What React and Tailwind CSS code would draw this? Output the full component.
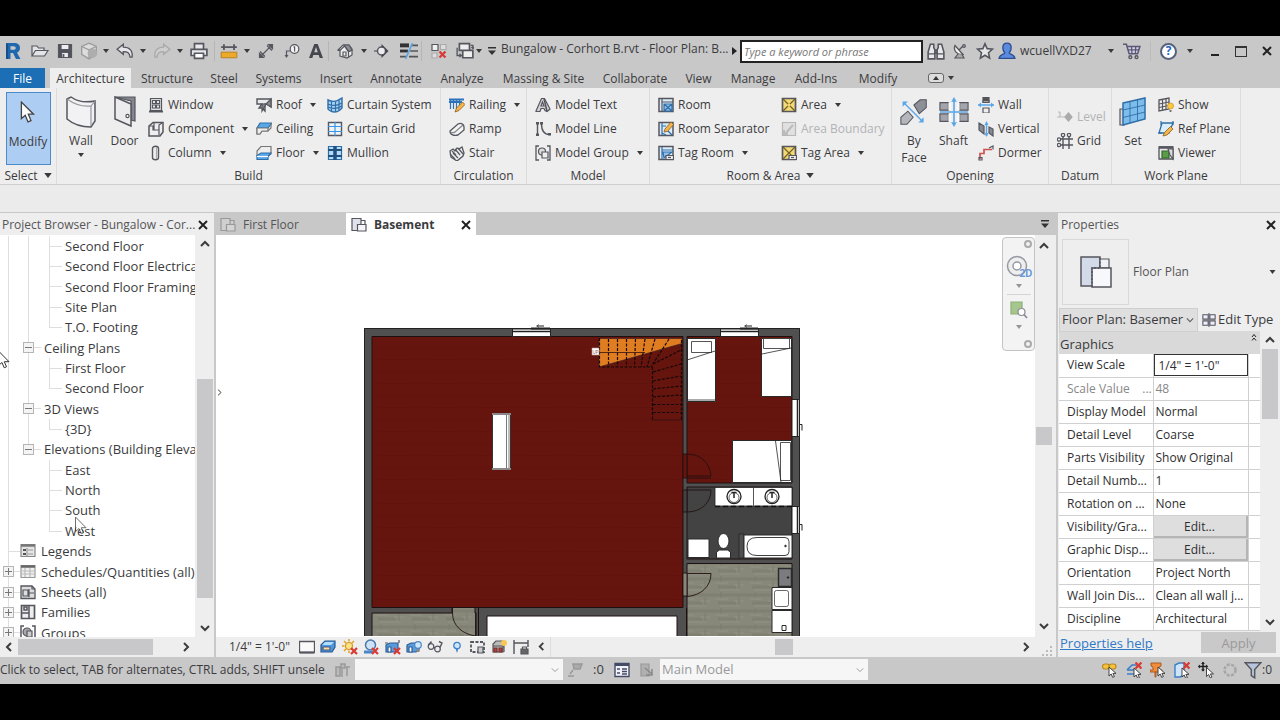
import React from "react";

/* ---------- small drawing helpers ---------- */

const D = "#55565e";

function Ic({ s = "size-4", vb = "0 0 16 16", children }) {
  return (
    <svg className={`${s} shrink-0`} viewBox={vb} fill="none" stroke={D} strokeWidth="1.2" aria-hidden="true">
      {children}
    </svg>
  );
}

function Caret({ s = "h-1 w-1.5" }) {
  return (
    <svg className={`${s} shrink-0`} viewBox="0 0 6 4" aria-hidden="true">
      <path d="M0 0h6L3 4z" fill="#3a3a3a" />
    </svg>
  );
}

function Chevron({ dir = "down", s = "size-2.5", color = "#3c3c3c", w = 2 }) {
  const paths = { down: "M1 3l4 4 4-4", up: "M1 7l4-4 4 4", left: "M7 1L3 5l4 4", right: "M3 1l4 4-4 4" };
  return (
    <svg className={`${s} shrink-0`} viewBox="0 0 10 10" fill="none" stroke={color} strokeWidth={w} aria-hidden="true">
      <path d={paths[dir]} />
    </svg>
  );
}

const RedX = ({ x = 9, y = 9 }) => (
  <path d={`M${x} ${y}l6 6M${x + 6} ${y}l-6 6`} stroke="#d83a34" strokeWidth="2.2" />
);

const Arrow = ({ x = 6, y = 5 }) => (
  <path transform={`translate(${x} ${y})`} d="M0 0v9l2.2-2 1.5 3.4 1.7-.8-1.5-3.2H7z" fill="#fff" stroke="#333" strokeWidth=".9" />
);

const CloseX = () => (
  <svg className="size-2.5" viewBox="0 0 10 10" stroke="#222" strokeWidth="2" aria-hidden="true">
    <path d="M1 1l8 8M9 1L1 9" />
  </svg>
);

/* ---------- title bar icons ---------- */

const icons = {
  logo: (
    <svg className="h-[18px] w-4" viewBox="0 0 16 18" aria-hidden="true">
      <path d="M1 1h8c4 0 6 2 6 5 0 2-1 4-3 4.700l3.500 6.300h-4.500l-3-6H5.500V17H1z" fill="#1f68ae" />
      <path d="M5.500 4.200h3c1.500 0 2.200.7 2.200 1.800S10 7.800 8.500 7.800h-3z" fill="#c8c8c9" />
      <path d="M1 1l2 1.500V17H1z" fill="#174f8a" />
    </svg>
  ),
  open: <Ic s="h-4 w-[18px]" vb="0 0 18 16"><path d="M1 13V3h5l1.500 2H13v2.500M1 13l3.500-5.500H17L13.500 13z" fill="#e4e4e6" /></Ic>,
  save: <Ic><path d="M1.500 1.500h13v13h-13z" fill="#51525d" /><path d="M4 1.500h8v5H4z" fill="#ededf0" /><path d="M4.500 9.500h7v5h-7z" fill="#ededf0" /><path d="M6.500 11v3" strokeWidth="1.800" /></Ic>,
  cube: <Ic s="size-[18px]"><path d="M8 1l6.500 3v7L8 15l-6.500-4V4z" fill="#dcdcdc" stroke="#9c9c9c" /><path d="M1.500 4L8 7v8M8 7l6.500-3" stroke="#9c9c9c" /><circle cx="11" cy="10" r="4.200" fill="#adadad" stroke="none" /></Ic>,
  undo: <Ic s="size-[18px]"><path d="M6.500 2L1 6.500 6.500 11V8.500c4 0 5.500 1 6 5h1.800c.7-6-2.300-9-7.800-9z" fill="#e6e6e8" /></Ic>,
  redo: <Ic s="size-[18px]"><path d="M9.500 2L15 6.500 9.500 11V8.500c-4 0-5.500 1-6 5H1.700c-.7-6 2.300-9 7.800-9z" fill="#cecece" stroke="#a9a9a9" /></Ic>,
  print: <Ic s="size-[18px]"><path d="M4 6V1.500h8V6M1 6.500h14V12H1z" fill="#e9e9eb" strokeWidth="1.500" /><path d="M4 10h8v4.500H4z" fill="#fff" strokeWidth="1.500" /></Ic>,
  measure: <Ic s="size-[18px]"><path d="M1 4.500h14M3.500 2v5M12.500 2v5" strokeWidth="1.600" /><path d="M1 9h14v5H1z" fill="#eda928" stroke="#b67d1d" strokeWidth=".8" /></Ic>,
  dim: <Ic><path d="M3 13L13 3M2 8.500l5 5M9 2.500l5 5" /><path d="M1.500 14.500v-4l4 4zM14.500 1.500v4l-4-4z" fill={D} /></Ic>,
  tag: <Ic><circle cx="10.500" cy="6" r="4.300" fill="#f3f3f3" /><path d="M10.600 3.500v5M9.600 4.400l1-.9M6 8H2.500v5" /><path d="M.5 12h4l-2 3z" fill={D} stroke="none" /></Ic>,
  letter: <Ic><path d="M1 15L6.300 1h3.400L15 15h-3.300l-1-3H5.300l-1 3zM6.200 9.300h3.600L8 4z" fill="#45464e" stroke="none" fillRule="evenodd" /></Ic>,
  house: <Ic><path d="M1 7l5-5h6l3 4v6l-5 3-7-2V7z" fill="#eee" /><path d="M1 7.500h2L7.500 3l4 6v5.500M11.500 8.500L15 7M6 9h3v4H6z" /><path d="M7 2h5l3 5-3 1.500z" fill="#8d8f98" /></Ic>,
  section: <Ic><circle cx="7.500" cy="8" r="4" fill="#ececee" strokeWidth="1.500" /><path d="M7.500 1l7 7-7 7v-3a4 4 0 000-8z" fill="#45464e" stroke="none" /><path d="M0 8h3.500" /></Ic>,
  thin: <Ic s="size-[18px]"><path d="M0 3h8" strokeWidth="3.500" stroke="#333" /><path d="M0 8h7" strokeWidth="2.500" stroke="#333" /><path d="M0 13h6M10 3h6M9 8h7M8 13h8" strokeWidth="1.500" stroke="#555" /><path d="M11 1L5 15" stroke="#5ea6e6" strokeWidth="1.500" /></Ic>,
  hid: <Ic><path d="M1 1.500h6v6H1z" fill="#eee" /><path d="M9.500 1.500H15v5H9.500zM1 10h5v5H1z" stroke="#aaa" fill="#ddd" /><RedX x={8.500} y={8.500} /></Ic>,
  sw: <Ic s="size-[18px]"><path d="M3 1.500h9v6H3zM6 7.500h9V14H6z" fill="#eee" strokeWidth="1.500" /><path d="M1 5v7h3M13 3h2v3" /><path d="M3 10l3 2-3 2zM13 4.500h4l-2 2z" fill={D} stroke="none" /></Ic>,
  cust: <svg className="h-2 w-2" viewBox="0 0 8 8" aria-hidden="true"><path d="M0 0h8v1.500H0zM0 3.500h8L4 8z" fill="#333" /></svg>,
  bino: <Ic s="size-[18px]"><path d="M3 2h3v3l1 2v8H1V9zM13 2h-3v3L9 7v8h6V9z" fill="#e8e8ea" strokeWidth="1.400" /><path d="M7 7h2v3H7zM1 10.500h6M9 10.500h6" /></Ic>,
  sat: <Ic><path d="M3 2.500c-2 5 2 9.500 8 9zM7 7l4-4" fill="#f3f3f3" strokeWidth="1.300" /><circle cx="12" cy="3" r="1.300" /><path d="M6 11l-3 4h9l-2-3.500" fill="#aaa" /></Ic>,
  star: <Ic s="size-[18px]"><path d="M8 1.500l1.900 4.400 4.800.4-3.600 3.200 1 4.800L8 11.800l-4.100 2.500 1-4.800L1.300 6.300l4.800-.4z" fill="#e6e6e8" strokeWidth="1.400" /></Ic>,
  user: <Ic s="size-[18px]"><path d="M8 1c2.500 0 3.700 1.700 3.700 4S10.500 9 10 9.700c0 1.300 4.500 1 5 4.800H1c.5-3.800 5-3.500 5-4.800C5.500 9 4.300 7.300 4.300 5S5.500 1 8 1z" fill="#5b8bdf" stroke="#2c4e8e" /></Ic>,
  cart: <Ic s="size-[18px]"><path d="M0 2h3l2.500 8.500H13L15 4H4" fill="#d6d6e2" stroke="#5b5878" strokeWidth="1.400" /><path d="M4.500 7h9.700M7.500 4l.5 6.500M11.300 4l-.3 6.500" stroke="#5b5878" /><circle cx="6.500" cy="13.500" r="1.300" /><circle cx="12" cy="13.500" r="1.300" /></Ic>,
};

const qat = [
  ["w-[26px]", "Application menu", icons.logo],
  ["w-7", "Open", icons.open],
  ["w-[22px]", "Save", icons.save],
  ["w-[26px]", "Synchronize", icons.cube],
  ["w-2", "Synchronize options", <Caret key="c" />],
  ["w-[29px]", "Undo", icons.undo],
  ["w-2", "Undo list", <Caret key="c" />],
  ["w-[29px]", "Redo", icons.redo],
  ["w-2", "Redo list", <Caret key="c" />],
  ["w-[30px]", "Print", icons.print],
  ["w-[29px] border-l border-[#b5b5b5]", "Measure", icons.measure],
  ["w-2", "Measure options", <Caret key="c" />],
  ["w-[30px]", "Aligned dimension", icons.dim],
  ["w-[22px]", "Tag by category", icons.tag],
  ["w-[25px]", "Text", icons.letter],
  ["w-8 border-l border-[#b5b5b5]", "Default 3D view", icons.house],
  ["w-2", "3D view options", <Caret key="c" />],
  ["w-7", "Section", icons.section],
  ["w-[25px]", "Thin lines", icons.thin],
  ["w-[34px] border-l border-[#b5b5b5]", "Close inactive views", icons.hid],
  ["w-5", "Switch windows", icons.sw],
  ["w-2", "Switch windows list", <Caret key="c" />],
  ["w-[18px]", "Customize toolbar", icons.cust],
];

const BarButton = ({ w, label, children }) => (
  <button aria-label={label} className={`flex h-5 shrink-0 items-center justify-center ${w}`}>{children}</button>
);

function TitleBar() {
  return (
    <header className="flex h-[30px] shrink-0 items-center overflow-hidden bg-[#c8c8c9]">
      {qat.map(([w, label, icon]) => <BarButton key={label} w={w} label={label}>{icon}</BarButton>)}
      <div className="min-w-[230px] flex-1 pb-1 text-[12px] whitespace-nowrap">Bungalow - Corhort B.rvt - Floor Plan: B...</div>
      <BarButton w="w-2" label="Expand search">
        <svg className="h-2 w-1.5" viewBox="0 0 6 8" aria-hidden="true"><path d="M0 0l5 4-5 4z" fill="#222" /></svg>
      </BarButton>
      <input aria-label="Search" placeholder="Type a keyword or phrase" className="ml-px h-[23px] w-[183px] shrink-0 border-2 border-[#222] bg-white px-0.5 text-[11px] italic placeholder:text-[#777]" />
      <BarButton w="w-[25px]" label="Search">{icons.bino}</BarButton>
      <BarButton w="w-6" label="Communication center">{icons.sat}</BarButton>
      <BarButton w="w-[26px]" label="Favorites">{icons.star}</BarButton>
      <button className="flex shrink-0 items-center gap-1 text-[12px]">{icons.user}<span className="w-[84px] text-left">wcuellVXD27</span><Caret /></button>
      <BarButton w="w-9" label="App store">{icons.cart}</BarButton>
      <BarButton w="w-9 border-l border-[#bbb]" label="Help">
        <span className="flex size-[17px] items-center justify-center rounded-full border-2 border-[#55617c] bg-white text-[12px] leading-none font-bold text-[#2a62c4]">?</span>
      </BarButton>
      <BarButton w="w-2" label="Help options"><Caret /></BarButton>
      <div className="flex w-[86px] shrink-0 justify-end">
        <BarButton w="w-[26px]" label="Minimize"><span className="mt-2 h-0.5 w-2 bg-[#222]" /></BarButton>
        <BarButton w="w-[26px]" label="Maximize"><span className="h-[11px] w-3 border border-t-2 border-[#333]" /></BarButton>
        <BarButton w="w-[26px]" label="Close"><CloseX /></BarButton>
      </div>
    </header>
  );
}

/* ---------- ribbon ---------- */

const tabs = [
  ["Structure", "w-[72px]"], ["Steel", "w-[42px]"], ["Systems", "w-[67px]"], ["Insert", "w-12"], ["Annotate", "w-[72px]"],
  ["Analyze", "w-[60px]"], ["Massing & Site", "w-[103px]"], ["Collaborate", "w-20"], ["View", "w-[47px]"],
  ["Manage", "w-[62px]"], ["Add-Ins", "w-16"], ["Modify", "w-[60px]"],
];

function Tabs() {
  return (
    <nav className="flex h-[22px] shrink-0 items-end overflow-hidden bg-[#c8c8c9] text-[12px]">
      <button className="h-5 w-[45px] shrink-0 bg-[#1c6fb5] pt-0.5 text-white">File</button>
      <button className="ml-[5px] h-5 w-[81px] shrink-0 bg-[#eeeeef] pt-0.5">Architecture</button>
      {tabs.map(([t, w]) => <button key={t} className={`h-5 shrink-0 pt-0.5 whitespace-nowrap ${w}`}>{t}</button>)}
      <button aria-label="Minimize ribbon" className="ml-5 flex h-5 items-center gap-1">
        <span className="flex h-2.5 w-4 items-center justify-center rounded-[3px] border border-[#666] bg-[#ddd]">
          <svg className="h-1 w-1.5" viewBox="0 0 6 4" aria-hidden="true"><path d="M0 4h6L3 0z" fill="#333" /></svg>
        </span>
        <Caret />
      </button>
    </nav>
  );
}

const blue = "#5aa7e8";
const paleBlue = "#a9d3f5";
const navy = "#2f6ea8";

const rib = {
  window: <Ic><path d="M2.500 1.500h11v12h-11z" fill="#ddd" /><path d="M4.500 3.500h3v3h-3zM8.500 3.500h3v3h-3zM4.500 8h3v3h-3zM8.500 8h3v3h-3z" fill="#f4f4f4" /><path d="M1 14.500h14" strokeWidth="2" /></Ic>,
  component: <Ic><path d="M1 5l4-3.500h10V11l-3 4H1z" fill="#eee" strokeWidth="1.500" /><path d="M1 5h4v4h6V4l3-2M11 9v5M6 9V2" /></Ic>,
  column: <Ic><path d="M4.500 3.500c0-3 6-3 6 0v9c0 3-6 3-6 0z" fill="#eee" strokeWidth="1.400" /><path d="M8.500 2v12" stroke="#aaa" /></Ic>,
  roof: <Ic><path d="M1 2h14v8l-3-2v-1H9v7l-3-3H3l3-4H1z" fill="#eaeaec" strokeWidth="1.400" /><path d="M6 7h4l-4 7zM10 7l5-5v8z" fill="#888a92" /></Ic>,
  ceiling: <Ic><path d="M4 2h12l-4 5H1z" fill={blue} stroke={navy} /><path d="M1 7v6h3l2-3h6l3-3V2" stroke="#777" /><path d="M1 13V7h11v3H6l-2 3z" fill="#eee" stroke="#777" /></Ic>,
  floor: <Ic><path d="M5 1.500h10V9l-3 2H1V6z" fill="#eee" stroke="#777" /><path d="M1 10.500L5 8h10l-3 3.500V14.500H1z" fill={blue} stroke={navy} /><path d="M1 11.500h11" stroke="#fff" /></Ic>,
  csystem: <Ic><path d="M1 3c4 2 8 2 12-1l2-1v10l-2 2c-4 3-7 3-11 0L1 12z" fill={paleBlue} stroke={navy} strokeWidth="1.400" /><path d="M4.500 4v10M8.500 4.500v10M12 3v10M1 7c4 2 9 2 14-1M1 10c4 2 9 2 14-1" stroke={navy} /></Ic>,
  cgrid: <Ic><path d="M1.500 1.500h13v13h-13z" fill="#edf5fc" strokeWidth="1.400" /><path d="M8 1v14M1 5.500h14M1 10.500h14" stroke="#3f93dd" /></Ic>,
  mullion: <Ic><path d="M1.500 1.500h13v13h-13z" fill="#b5daf7" stroke={navy} /><path d="M8 1v14" strokeWidth="3.500" stroke="#1f5080" /><path d="M1 5h14M1 11h14" stroke="#1f5080" strokeWidth="1.800" /></Ic>,
  railing: <Ic><path d="M0 2.500h15M0 5h13" stroke="#2c72ba" strokeWidth="2" /><path d="M1.500 3v9M4.500 3v9M7.500 3v9M10.500 3v6" stroke="#2c72ba" /><path d="M6 15l1.500-4 6-6 2.500 2.500-6 6z" fill="#f3b44b" stroke="#8a5c1c" strokeWidth=".8" /></Ic>,
  ramp: <Ic><path d="M1 10l8-7c3-1.500 6 0 6 3v3l-6 5c-4 1-8 0-8-4z" fill="#f4f4f4" strokeWidth="1.300" /><path d="M1 10c1 2 4 2 5 1l8-7" stroke="#888" /></Ic>,
  stair: <Ic><path d="M1 6l3-2 2 2 2-3 2 1 3-2 2 6-1 3-6 5-6-4z" fill="#eee" strokeWidth="1.300" /><path d="M3 6l4 4M6 4l5 6M9 3l5 6M1 9l5 5M4 8l5 5" /></Ic>,
  mtext: <Ic><path d="M1 14L6.500 1.500h3L15 12l-3 2.500-2-1-1-2H6l-1 3H1zM6 9h3L7.500 5z" fill="#d3d3d6" fillRule="evenodd" /><path d="M9 1.500L12 14.500" strokeWidth="1.500" /></Ic>,
  mline: <Ic><path d="M2.500 2v12M6.500 2.500c0 7 3 11 8 11" strokeWidth="1.400" /><path d="M1 1h3v2.500H1zM1 12.500h3V15H1zM5 1h3v2.500H5zM13 12h3v2.500h-3z" fill={D} stroke="none" /></Ic>,
  mgroup: <Ic><path d="M4 1H1v14h3M12 1h3v14h-3" strokeWidth="1.300" /><circle cx="7" cy="6.500" r="3.500" fill="#ddd" /><path d="M7 7h6v6H7z" fill="#eee" /></Ic>,
  room: <Ic><path d="M1 1.500h14v13H1z" fill="#dcecf9" strokeWidth="1.500" /><path d="M4 2v12M4 5h11" /><path d="M6 7l8 7M14 7l-8 7M6 7h8v7H6z" stroke={navy} fill="#8fc1ea" /></Ic>,
  roomsep: <Ic><path d="M1 1.500h14v13H1z" fill="#dcecf9" strokeWidth="1.500" /><path d="M4 2v12M4 12l4 2M9 9l5 5M4 5h4" stroke={navy} /><path d="M6 11l1-3 6-7 2.500 2.500-6 7z" fill="#f3b44b" stroke="#8a5c1c" strokeWidth=".8" /></Ic>,
  tagroom: <Ic><path d="M1 1.500h14v13H1z" fill="#dcecf9" strokeWidth="1.500" /><path d="M4 2v12M4 5h11M5 7h9l-8 6z" stroke={navy} fill="#8fc1ea" /><path d="M8 10.500h7.500v4H8z" fill="#eee" /><path d="M10 12.500h3" /></Ic>,
  area: <Ic><path d="M1.500 1.500h13v13h-13z" fill="#f4d873" strokeWidth="1.700" /><path d="M2 2l12 12M14 2L2 14" stroke="#6e6028" /><circle cx="8" cy="8" r="1.500" fill="#f4d873" stroke="none" /></Ic>,
  areab: <Ic><path d="M1.500 1.500h13v13h-13z" fill="#e0e0e0" stroke="#b7b7b7" /><path d="M4 13l8-9M3 9v4h4" stroke="#bbb" strokeWidth="2" /></Ic>,
  tagarea: <Ic><path d="M1.500 1.500h13v13h-13z" fill="#f4d873" strokeWidth="1.700" /><path d="M2 2l12 12M14 2L2 14" stroke="#6e6028" /><path d="M8 10.500h7.500v4H8z" fill="#eee" /><path d="M10 12.500h3" /></Ic>,
  owall: <Ic><path d="M5 0h6v5H5z" fill="#555" /><path d="M5 4h6v1.500H5zM5 11h6v5H5z" fill="#eee" /><path d="M0 8h16" stroke={blue} strokeWidth="1.500" /><path d="M3 5.500L0 8l3 2.500zM13 5.500L16 8l-3 2.500z" fill={blue} stroke="none" /></Ic>,
  overt: <Ic><path d="M1 2l5 3v8l-5-4zM11 6l4 2v7l-4-3z" fill="#888a92" /><path d="M8.500 2v13" stroke={blue} strokeWidth="1.500" /><path d="M6.500 4l2-4 2 4zM6.500 12l2 4 2-4z" fill={blue} stroke="none" /></Ic>,
  dormer: <Ic><path d="M2 14V8.500h4V4.500h8" stroke="#d05050" strokeWidth="1.700" /><path d="M1 12.500h3V15H1zM11 3l4-2v3.500" /></Ic>,
  level: <Ic><path d="M0 8h12M3 3v5M1 3h2" stroke="#bbb" /><path d="M8 8l3.500-4L15 8l-3.500 4z" fill="#aaa" stroke="#aaa" /></Ic>,
  grid: <Ic><path d="M3 6h13M3 12h13M6 3v13M12 3v13" strokeWidth="1.400" /><circle cx="6" cy="2" r="1.700" /><circle cx="12" cy="2" r="1.700" /><circle cx="2" cy="6.500" r="1.700" /><circle cx="2" cy="12" r="1.700" /></Ic>,
  show: <Ic><path d="M1 3l10-2v11L1 14z" fill="#eee" strokeWidth="1.300" /><path d="M1 7l10-2M1 10.500l10-2M4.500 2.500v11M8 1.500v11" /><circle cx="12.500" cy="9" r="3" fill="#fbc944" stroke="#d0952a" strokeWidth=".8" /><path d="M11.500 13h2v2h-2z" fill="#777" stroke="none" /></Ic>,
  ref: <Ic><path d="M4 2h11l-4 10H1z" fill="#d9edfb" stroke={navy} strokeWidth="1.300" /><path d="M3 0v4M15 0v4M0 12h4" stroke={navy} /><path d="M5 15l1.500-3.500 6-6L15 8l-6 6z" fill="#f3b44b" stroke="#8a5c1c" strokeWidth=".8" /></Ic>,
  viewer: <Ic><path d="M1 2h14v12H1z" fill="#e8e8e8" strokeWidth="1.300" /><path d="M1 2.500h14" strokeWidth="2.500" /><path d="M4 6h7v7H4z" fill="#5a9c48" stroke="#33692a" /><path d="M10 4h5v10l-3-4z" fill="#ddd" /></Ic>,
};

function Tool({ icon, label, menu, off }) {
  return (
    <button className={`flex h-6 items-center gap-1 whitespace-nowrap text-left ${off ? "text-[#b3b3b5]" : ""}`}>
      {rib[icon]}
      <span>{label}</span>
      {menu && <span className="ml-1 flex"><Caret /></span>}
    </button>
  );
}

const Col = ({ w, children }) => <div className={`flex shrink-0 flex-col pt-[5px] ${w}`}>{children}</div>;

function Big({ w, label, menu, children }) {
  return (
    <button className={`flex shrink-0 flex-col items-center pt-1 ${w}`}>
      <span className="flex h-10 items-center">{children}</span>
      <span className="leading-[17px]">{label}</span>
      {menu && <span className="mt-1"><Caret /></span>}
    </button>
  );
}

function Panel({ w, title, menu, children }) {
  return (
    <section className={`flex shrink-0 flex-col border-r border-[#dcdcdd] ${w}`}>
      <div className="flex h-[79px] shrink-0">{children}</div>
      <h2 className="flex h-[17px] items-center justify-center gap-1.5 leading-[17px]">{title}{menu && <Caret s="h-[5px] w-2" />}</h2>
    </section>
  );
}

function Ribbon() {
  return (
    <div className="flex h-[97px] shrink-0 overflow-hidden border-b border-[#cfcfd0] bg-[#eeeeef] text-[12px]">
      <Panel w="w-[57px]" title="Select" menu>
        <button className="mx-auto mt-1 flex h-[73px] w-[45px] flex-col items-center border border-[#4b8bcb] bg-[#aecdf2]">
          <svg className="mt-2 h-[22px] w-4" viewBox="0 0 14 20" aria-hidden="true"><path d="M1 1v15l3.500-3 2.500 6 2.700-1.200L7.300 12H12z" fill="#fff" stroke="#444" strokeWidth="1.200" /></svg>
          <span className="mt-2.5">Modify</span>
        </button>
      </Panel>
      <Panel w="w-[384px]" title="Build">
        <Big w="w-12" label="Wall" menu>
          <Ic s="h-8 w-[30px]" vb="0 0 30 32"><path d="M1 3l4-2c7 5 14 6 24 4v20l-4 6C16 31 8 29 1 23z" fill="#f2f2f4" strokeWidth="1.500" /><path d="M1 3c7 5 15 8 24 7l4-5M25 10v20" stroke="#96979e" /></Ic>
        </Big>
        <Big w="w-[39px]" label="Door">
          <Ic s="h-8 w-6" vb="0 0 24 32"><path d="M2 1h20v24l-4-1V5L2 1z" fill="#83868f" /><path d="M2 1l16 7v22L2 23z" fill="#ececee" strokeWidth="1.500" /><circle cx="14.500" cy="20" r="1.600" fill="#fff" /></Ic>
        </Big>
        <Col w="ml-1 w-[108px]"><Tool icon="window" label="Window" /><Tool icon="component" label="Component" menu /><Tool icon="column" label="Column" menu /></Col>
        <Col w="w-[71px]"><Tool icon="roof" label="Roof" menu /><Tool icon="ceiling" label="Ceiling" /><Tool icon="floor" label="Floor" menu /></Col>
        <Col w="w-28"><Tool icon="csystem" label="Curtain System" /><Tool icon="cgrid" label="Curtain Grid" /><Tool icon="mullion" label="Mullion" /></Col>
      </Panel>
      <Panel w="w-[86px]" title="Circulation">
        <Col w="ml-2"><Tool icon="railing" label="Railing" menu /><Tool icon="ramp" label="Ramp" /><Tool icon="stair" label="Stair" /></Col>
      </Panel>
      <Panel w="w-[123px]" title="Model">
        <Col w="ml-2"><Tool icon="mtext" label="Model Text" /><Tool icon="mline" label="Model Line" /><Tool icon="mgroup" label="Model Group" menu /></Col>
      </Panel>
      <Panel w="w-[242px]" title="Room & Area" menu>
        <Col w="ml-2 w-[123px]"><Tool icon="room" label="Room" /><Tool icon="roomsep" label="Room Separator" /><Tool icon="tagroom" label="Tag Room" menu /></Col>
        <Col w=""><Tool icon="area" label="Area" menu /><Tool icon="areab" label="Area Boundary" off /><Tool icon="tagarea" label="Tag Area" menu /></Col>
      </Panel>
      <Panel w="w-[157px]" title="Opening">
        <Big w="w-[44px]" label={<>By<br />Face</>}>
          <Ic s="size-7" vb="0 0 32 32"><path d="M16 8l7-6h7v9l-8 7z" fill="#8e9097" /><path d="M1 30v-8l8-7 6 7-7 8z" fill="#b5b6bb" /><path d="M5 6l20 20" stroke={blue} strokeWidth="1.700" /><path d="M3 4h6l-6 6zM27 28h-6l6-6z" fill={blue} stroke="none" /></Ic>
        </Big>
        <Big w="w-[35px]" label="Shaft">
          <Ic s="size-[30px]" vb="0 0 32 32"><path d="M1 6h9v8H1zM1 18h9v8H1zM22 6h9v8h-9zM22 18h9v8h-9z" fill="#a4a5aa" /><path d="M10 6h3v8h-3zM19 6h3v8h-3zM10 18h3v8h-3zM19 18h3v8h-3z" fill="#f8f8f8" stroke="none" /><path d="M16 2v28M1 16h30" stroke={blue} strokeWidth="1.700" /><path d="M13 5l3-5 3 5zM13 27l3 5 3-5z" fill={blue} stroke="none" /></Ic>
        </Big>
        <Col w="ml-[7px]"><Tool icon="owall" label="Wall" /><Tool icon="overt" label="Vertical" /><Tool icon="dormer" label="Dormer" /></Col>
      </Panel>
      <Panel w="w-[63px]" title="Datum">
        <div className="ml-2 flex flex-col pt-[17px]"><Tool icon="level" label="Level" off /><Tool icon="grid" label="Grid" /></div>
      </Panel>
      <Panel w="w-[129px]" title="Work Plane">
        <Big w="w-[42px]" label="Set">
          <Ic s="h-8 w-7" vb="0 0 28 32"><path d="M1 13h4v16H1z" fill="#ddd" /><path d="M4 7l22-5v21L4 29z" fill="#7dbdec" stroke={navy} strokeWidth="1.500" /><path d="M4 14l22-5M4 21.500L26 16M11 5.500v21.500M18.500 4v21" stroke={navy} strokeWidth=".9" /></Ic>
        </Big>
        <Col w="ml-1"><Tool icon="show" label="Show" /><Tool icon="ref" label="Ref Plane" /><Tool icon="viewer" label="Viewer" /></Col>
      </Panel>
    </div>
  );
}

/* ---------- project browser ---------- */

const tree = [
  { l: 3, t: "Second Floor", rail: true },
  { l: 3, t: "Second Floor Electrical", rail: true },
  { l: 3, t: "Second Floor Framing", rail: true },
  { l: 3, t: "Site Plan", rail: true },
  { l: 3, t: "T.O. Footing", rail: true, last: true },
  { l: 2, t: "Ceiling Plans" },
  { l: 3, t: "First Floor", rail: true },
  { l: 3, t: "Second Floor", rail: true, last: true },
  { l: 2, t: "3D Views" },
  { l: 3, t: "{3D}", rail: true, last: true },
  { l: 2, t: "Elevations (Building Elevation)", last: true },
  { l: 3, t: "East" },
  { l: 3, t: "North" },
  { l: 3, t: "South" },
  { l: 3, t: "West", last: true },
  { l: 1, t: "Legends", icon: "legend", leaf: true },
  { l: 1, t: "Schedules/Quantities (all)", icon: "sched" },
  { l: 1, t: "Sheets (all)", icon: "sheet" },
  { l: 1, t: "Families", icon: "family" },
  { l: 1, t: "Groups", icon: "group" },
];

const treeIcons = {
  legend: <Ic><path d="M1 1.500h14v12H1z" fill="#e5e5e5" stroke="#888" /><path d="M1 2.500h14" stroke="#777" strokeWidth="2.500" /><path d="M3 6h3v2H3zM3 10h3v2H3z" fill="#555" stroke="none" /><path d="M8 7h5M8 11h5M7 5v8" stroke="#999" /></Ic>,
  sched: <Ic><path d="M1 1.500h14v12H1z" fill="#f0f0f0" stroke="#999" /><path d="M1 2.500h14" stroke="#666" strokeWidth="2.500" /><path d="M1 7h14M1 10h14M5 4v9M10 4v9" stroke="#bbb" /></Ic>,
  sheet: <Ic><path d="M1 2h11l3 3v9.500H1z" fill="#ddd" strokeWidth="1.300" /><path d="M3 6h5v6H3zM9 5v8M9 9h5M12 2v3h3" /></Ic>,
  family: <Ic><path d="M1.500 1.500h13v13h-13z" fill="#eee" strokeWidth="1.700" /><path d="M2 9h7V2M9 9v5M4 3h3v3H4z" strokeWidth="1.500" /></Ic>,
  group: <Ic><path d="M4 1H1v14h3M12 1h3v14h-3" strokeWidth="1.500" /><circle cx="7" cy="7" r="4" fill="#aaa" /><path d="M7 6h5v6H7z" fill="#ccc" /></Ic>,
};

const line = "border-[#dededf]";

function Toggle({ open, last, name }) {
  return (
    <span className="flex w-[11px] shrink-0 flex-col items-center">
      <span className="w-px flex-1 bg-[#dededf]" />
      <button aria-label={`${open ? "Collapse" : "Expand"} ${name}`} className="flex size-[11px] items-center justify-center border border-[#b5b5b5] bg-[#f4f4f4]">
        <svg className="size-[7px]" viewBox="0 0 7 7" stroke="#777" aria-hidden="true"><path d={open ? "M0 3.500h7" : "M0 3.500h7M3.500 0v7"} /></svg>
      </button>
      <span className={`w-px flex-1 ${last ? "" : "bg-[#dededf]"}`} />
    </span>
  );
}

function TreeRow({ row }) {
  return (
    <li className="flex min-h-0 whitespace-nowrap">
      {row.l === 3 && (
        <>
          <span className={`ml-2 w-5 shrink-0 border-l ${line}`} />
          <span className={`w-[21px] shrink-0 ${row.rail ? `border-l ${line}` : ""}`} />
          <span className="flex w-4 shrink-0 flex-col">
            <span className={`w-[13px] flex-1 border-b border-l ${line}`} />
            <span className={`flex-1 ${row.last ? "" : `border-l ${line}`}`} />
          </span>
        </>
      )}
      {row.l === 2 && (
        <>
          <span className={`ml-2 w-[15px] shrink-0 border-l ${line}`} />
          <Toggle open last={row.last} name={row.t} />
          <span className="flex w-2.5 shrink-0 items-center"><span className="h-px w-[7px] bg-[#dededf]" /></span>
        </>
      )}
      {row.l === 1 && (
        <>
          <span className="flex w-5 shrink-0 pl-[3px]">
            {row.leaf ? <span className="w-[5px]" /> : <Toggle name={row.t} />}
            <span className={`flex flex-1 items-center ${row.leaf ? `border-l ${line}` : ""}`}><span className="h-px flex-1 bg-[#dededf]" /></span>
          </span>
          <span className="mr-[5px] flex shrink-0 items-center">{treeIcons[row.icon]}</span>
        </>
      )}
      <span className="flex items-center pt-px">{row.t}</span>
    </li>
  );
}

const Cursor = ({ at, op = "" }) => (
  <svg className={`pointer-events-none absolute h-[19px] w-3 ${at} ${op}`} viewBox="0 0 12 19" aria-hidden="true">
    <path d="M.500 1v14.500l3.500-3 2.200 5.300 2.300-1L6.300 11.700H11z" fill="#fff" stroke="#333" />
  </svg>
);

function Browser() {
  return (
    <aside className="relative flex w-[214px] shrink-0 flex-col bg-[#eeeeef]">
      <div className="flex h-[22px] shrink-0 items-center justify-between pt-0.5 pr-[5px] pl-0.5 text-[12px] text-[#555]">
        <h2 className="whitespace-nowrap">Project Browser - Bungalow - Cor...</h2>
        <button aria-label="Close project browser" className="flex size-[11px] items-center"><CloseX /></button>
      </div>
      <div className="flex min-h-0 flex-1">
        <div className="min-w-0 flex-1 overflow-hidden bg-white">
          <ul className="grid h-[408px] auto-rows-fr pt-px text-[13px]">
            {tree.map((row, i) => <TreeRow key={i} row={row} />)}
          </ul>
        </div>
        <div className="flex w-[19px] shrink-0 flex-col items-center justify-between py-1">
          <Chevron dir="up" />
          <span className="mt-[104px] h-[219px] w-4 shrink-0 bg-[#c8c7c9]" />
          <Chevron />
        </div>
      </div>
      <div className="flex h-5 shrink-0 items-center gap-1 pr-[23px] pl-1">
        <Chevron dir="left" />
        <span className="h-4 w-[135px] bg-[#c8c7c9]" />
        <span className="ml-auto flex"><Chevron dir="right" /></span>
      </div>
      <Cursor at="top-[137px] -left-0.5" />
      <Cursor at="top-[303px] left-[75px]" op="opacity-70" />
    </aside>
  );
}

/* ---------- drawing area ---------- */

const Sink = ({ x }) => (
  <g fill="#fff" stroke="#222">
    <circle cx={x} cy="496.500" r="7" strokeWidth="1.300" />
    <circle cx={x} cy="497.500" r="5" strokeWidth=".7" />
    <path d={`M${x} 492v6M${x - 2.500} 492.500h5`} strokeWidth="1.500" />
  </g>
);

function FloorPlan() {
  return (
    <svg className="block h-[401px] w-[820px]" viewBox="216 235 820 401" role="img" aria-label="Basement floor plan">
      <defs>
        <pattern id="planks" width="48" height="12" patternUnits="userSpaceOnUse">
          <rect width="48" height="12" fill="#66140e" />
          <path d="M0 11.500h48" stroke="#62130e" />
          <path d="M4 5.500h20" stroke="#6a1610" strokeWidth=".6" />
        </pattern>
        <pattern id="stone" width="34" height="16" patternUnits="userSpaceOnUse">
          <rect width="34" height="16" fill="#88887a" />
          <path d="M0 3h34M4 11h18" stroke="#808072" strokeWidth="3" />
          <path d="M2 7h12M20 9h10M6 14h20" stroke="#8e8e80" strokeWidth="1.500" />
          <path d="M7 0v6M25 5v8" stroke="#7b7b6d" />
        </pattern>
      </defs>
      <path d="M364 328h436v308H364z" fill="#505050" />
      <path d="M364.500 636V328.500h435V636" fill="none" stroke="#222" />
      <g stroke="#1c1010" strokeWidth="1">
        <path d="M372 336.500h311V607.500H372z" fill="url(#planks)" />
        <path d="M687 336.500h105V483H687z" fill="url(#planks)" />
        <path d="M687 487h105v72H687z" fill="#434343" />
        <path d="M687 563.500h105V640H687z" fill="url(#stone)" />
        <path d="M372 613h80v-5.500h23V613h1v30H372z" fill="url(#stone)" />
        <path d="M487 616h190v24H487z" fill="#fff" />
        <path d="M478.500 608v32M686.500 608v32" />
      </g>

      <g fill="#fff" stroke="#222">
        <path d="M512.500 329h38v7.500h-38zM720.500 329h38v7.500h-38zM792 399.500h7.500v37H792zM792 506.500h7.500v27H792z" />
        <path d="M512 331.500h38M720 331.500h38M797.500 400v36M797.500 507v26" strokeWidth="1.500" />
        <path d="M531 328.500h19M740 328.500h18" strokeWidth="2" />
        <path d="M537 326h7M745 326h7M800 424.500h2v6M800 524.500h2v6" fill="none" />
        <path d="M539 324.500l-2.500 1.500 2.500 1.500M747 324.500l-2.500 1.500 2.500 1.500" strokeWidth=".6" fill="none" />
      </g>

      <path d="M492.500 413.500h18v55h-18z" fill="#fff" stroke="#333" />
      <path d="M506.500 414v55M509 414v55" stroke="#555" strokeWidth=".8" />
      <path d="M492 414h19M492 469h19" stroke="#888" strokeWidth="2" />

      <path d="M599 338.500h83v5L599 367z" fill="#df7d20" stroke="#422" strokeWidth=".7" />
      <g fill="none" stroke="#160808" strokeWidth="1.200" strokeDasharray="3 1.500">
        <path d="M599.500 338v29h53M608.500 339v28M617.500 339v28M626.500 339v28M635.500 339l-1 28M645 339l-4 28M655 339l-8 28M669 339l-18 28" />
        <path d="M652.500 367v53M681.500 340v80M653 364l28-14M653 372l28-8M653 381l28-5M653 389l28-3M653 397l28-2M653 404.500h28M653 412.500h28" />
      </g>
      <path d="M600 352.500h45M652 420h30" stroke="#311" strokeWidth=".8" />
      <path d="M592 348h7v7h-7z" fill="#fff" stroke="#b99" strokeWidth=".6" />
      <text x="592.500" y="353.500" fontSize="4.500" fill="#844">UP</text>

      <g fill="#fff" stroke="#2a2a2a">
        <path d="M687.500 338.500h28v63h-28zM761.500 338.500h30v58h-30zM732.500 440.500h59v42h-59z" />
        <path d="M691.500 341.500h20v11h-20zM763.500 338.500h26v10h-26zM780.500 442.500h10v38h-10z" strokeWidth=".8" />
        <path d="M687 360l28-9M762 354l29-6M775.500 441l5.500 41M687 400h28" strokeWidth=".8" />
      </g>

      <g stroke="#211" strokeWidth=".9">
        <path d="M683 454h4v24h-4z" fill="#66140e" />
        <path d="M687 454c14 0 23 9 24 22H687M687 478h24" fill="none" />
        <path d="M683 490h4v22h-4z" fill="#434343" />
        <path d="M687 490h24c0 13-10 22-24 22" fill="none" />
        <path d="M683 573h4v23h-4z" fill="#88887a" />
        <path d="M687 573.500h24c0 13-10 22-24 23" fill="none" />
        <path d="M452.500 613v-5M452.500 613c0 13 10 21 23 23M475.500 612v24" fill="none" />
      </g>

      <path d="M715 487.500h77V506h-77z" fill="#fff" stroke="#222" strokeWidth=".8" />
      <path d="M753.500 488v18" stroke="#555" />
      <path d="M715 506.500h77" stroke="#111" strokeWidth="1.600" strokeDasharray="5 3" />
      <Sink x={734} />
      <Sink x={772} />
      <g fill="#fff" stroke="#2a2a2a">
        <path d="M688 539h21v18.500h-21z" />
        <path d="M716.500 558v-6l3-2h8l3 2v6z" />
        <ellipse cx="723.500" cy="541" rx="5.500" ry="7.500" />
        <path d="M739 534h5v24h-5z" fill="#505050" />
        <path d="M744 535h48v23h-48z" />
        <path d="M757 537.500h28q4 0 4 4v10q0 4-4 4h-28q-10 0-10-9t10-9z" strokeWidth=".9" />
        <circle cx="785.500" cy="546" r=".8" fill="#222" />
        <path d="M778.500 568.500h13v18h-13z" fill="#7c7c80" strokeWidth="1.400" />
        <circle cx="788" cy="577.500" r=".8" fill="#222" />
        <path d="M772 587.500h20v22h-20zM772 610.500h20v22h-20z" />
        <rect x="774.500" y="590.500" width="14" height="16" rx="2" strokeWidth=".7" />
        <path d="M782 625.500h4v5h-4z" />
      </g>
    </svg>
  );
}

const SheetIcon = ({ dim }) => (
  <Ic><path d="M1 1.500h9v12H1z" fill={dim ? "#cfcfd0" : "#dfe2ea"} stroke={dim ? "#999" : D} /><path d="M10 3.500h4V7M6.500 7.500H15V14H6.500z" fill={dim ? "#d4d4d5" : "#f6f6fa"} stroke={dim ? "#999" : D} /></Ic>
);

const house = <><path d="M1 6l4-2h8v7l-3 2H1z" fill="#5a9bdc" stroke="#2f5f98" /><path d="M3 8h3v5H3z" fill="#fff" stroke="#2f5f98" /></>;
const viewTools = [
  ["Detail level", <Ic key="i"><path d="M.5 2.500h15v11H.5z" fill="#f9f9f9" strokeWidth="1.300" /><path d="M1 13.500h14" strokeWidth="2" /></Ic>],
  ["Visual style", <Ic key="i"><path d="M1 6l4-4h10v6l-3 5H1z" fill="#4a98e4" stroke="#27588e" /><path d="M5 3h9l-3 3H2z" fill="#b4ddfb" stroke="none" /><path d="M3 8h7v3H3z" fill="#f2e4a0" stroke="#557" /></Ic>],
  ["Sun path", <Ic key="i"><circle cx="7" cy="7" r="3.500" fill="#fde487" stroke="#d99a23" /><path d="M7 0v2.500M7 11.500V14M0 7h2.500M2 2l2 2M12 2l-2 2M2 12l2-2" stroke="#e3a126" strokeWidth="1.500" /><RedX /></Ic>],
  ["Shadows", <Ic key="i"><circle cx="7.500" cy="6" r="5" fill="#cfe3f7" stroke="#4978ab" strokeWidth="1.500" /><path d="M1 13h9" stroke="#4a86c8" strokeWidth="3" /><RedX /></Ic>],
  ["Crop view", <Ic key="i">{house}<path d="M0 4h3M14 1v3" /><RedX /></Ic>],
  ["Show crop region", <Ic key="i">{house}<circle cx="12" cy="6" r="3.300" fill="#cfe6fa" stroke="#4a86c8" /><path d="M10.500 10h3v3h-3z" fill="#888" stroke="none" /></Ic>],
  ["Temporary hide", <Ic key="i"><circle cx="4" cy="7.500" r="2.800" /><circle cx="10.500" cy="10" r="2.800" /><path d="M1.500 6l3-3.500M6.500 8l1.500.800M13 8.500l2-4.500-3-1.500" strokeWidth="1.400" /></Ic>],
  ["Reveal hidden", <Ic key="i"><circle cx="8" cy="6.500" r="3.200" fill="#cfe6fa" stroke="#3f83cb" strokeWidth="1.300" /><path d="M6.500 9.500h3L8 14z" fill="#3f83cb" stroke="none" /></Ic>],
  ["View properties", <Ic key="i"><path d="M1 3h13v10H1z" strokeDasharray="3 1.500" strokeWidth="1.800" /><path d="M8 8h5v6H8z" fill="#ccc" /></Ic>],
  ["Analytical model", <Ic key="i"><path d="M1 5l3-3h7v11H1z" fill="#bbb" /><path d="M2 9h3v4H2zM7 9h3v4H7z" fill="#b8413b" stroke="#733" /><path d="M12 5v8M1 7h11" /><circle cx="12" cy="4" r="3" fill="#f9c854" stroke="none" /></Ic>],
  ["Constraints", <Ic key="i"><path d="M1 1v14M15 1v7M1 4h14" strokeWidth="1.400" /><path d="M8 10h7v5H8z" fill="#666" /><path d="M9.500 10V8h4v2" /></Ic>],
];

function Workspace() {
  return (
    <main className="flex min-w-0 flex-1 flex-col border-l-2 border-[#c8c8c9] bg-[#eeeeef]">
      <div className="flex h-[22px] shrink-0 items-end bg-[#c8c8c9] text-[12px]">
        <button className="flex h-[22px] w-[130px] items-center gap-[7px] pt-0.5 pl-1 text-[#555]"><SheetIcon dim />First Floor</button>
        <div className="flex h-[22px] w-[130px] items-center bg-white pt-0.5 pr-[5px] pl-[5px]">
          <button className="flex items-center gap-[7px] font-bold"><SheetIcon />Basement</button>
          <button aria-label="Close Basement" className="ml-auto"><CloseX /></button>
        </div>
        <button aria-label="Open views" className="mr-[7px] mb-[7px] ml-auto">{icons.cust}</button>
      </div>
      <div className="flex min-h-0 flex-1">
        <div className="relative min-w-0 flex-1 overflow-hidden bg-white">
          <FloorPlan />
          <span className="absolute top-[154px] left-0"><Chevron dir="right" s="size-[7px]" w={1.500} color="#777" /></span>
          <div className="absolute top-0.5 right-0 flex h-[114px] w-[33px] flex-col items-center rounded border border-[#c4c4c5] bg-[#f3f3f4] py-0.5">
            <span className="mr-0.5 size-2 shrink-0 self-end rounded-full border-2 border-[#aaa]" />
            <button aria-label="Steering wheel" className="relative mt-1">
              <Ic s="h-7 w-7" vb="0 0 28 28"><circle cx="12" cy="14" r="9.500" fill="#eee" stroke="#9599a4" strokeWidth="1.500" /><circle cx="12" cy="14" r="4" fill="#fff" stroke="#9599a4" strokeWidth="1.500" /></Ic>
              <span className="absolute right-0 bottom-0.5 text-[10px] leading-none font-bold text-[#6a9ad8]">2D</span>
            </button>
            <span className="mt-1 opacity-50"><Caret /></span>
            <span className="my-1.5 h-px w-6 shrink-0 bg-[#d4d4d4]" />
            <button aria-label="Zoom region">
              <Ic s="size-[18px]" vb="0 0 18 18"><path d="M1 1h11v12H1z" fill="#a5c78e" stroke="#8db076" /><circle cx="11.500" cy="11" r="3.500" fill="#fff" stroke="#8a8d96" /><path d="M14 13.500l3 3.500" stroke="#8a8d96" strokeWidth="1.800" /></Ic>
            </button>
            <span className="mt-1.5 opacity-50"><Caret /></span>
            <span className="mt-auto mr-0.5 size-2 shrink-0 self-end rounded-full border-2 border-[#aaa]" />
          </div>
        </div>
        <div className="flex w-[21px] shrink-0 flex-col items-center justify-between py-1.5 pr-1">
          <Chevron dir="up" />
          <span className="h-[18px] w-4 bg-[#c8c7c9]" />
          <Chevron />
        </div>
      </div>
      <div className="flex h-5 shrink-0 items-center pb-px pl-[13px]">
        <span className="w-[70px] shrink-0 text-[12px] whitespace-nowrap">1/4" = 1'-0"</span>
        <div className="flex w-[230px] shrink-0 justify-between">
          {viewTools.map(([label, icon]) => <button key={label} aria-label={label}>{icon}</button>)}
        </div>
        <span className="ml-2 flex"><Chevron dir="left" s="size-[9px]" /></span>
        <span className="ml-1 h-5 flex-1 border-l border-[#ddd]" />
        <span className="mr-[228px] h-4 w-[18px] bg-[#c8c7c9]" />
        <Chevron dir="right" />
        <svg className="mr-1 ml-[11px] size-2.5 self-end" viewBox="0 0 10 10" fill="#bbb" aria-hidden="true"><path d="M8 0h2v2H8zM4 4h2v2H4zM8 4h2v2H8zM0 8h2v2H0zM4 8h2v2H4zM8 8h2v2H8z" /></svg>
      </div>
    </main>
  );
}

/* ---------- properties ---------- */

const props = [
  ["View Scale", "1/4\" = 1'-0\"", "input"],
  ["Scale Value    ...", "48", "muted"],
  ["Display Model", "Normal"],
  ["Detail Level", "Coarse"],
  ["Parts Visibility", "Show Original"],
  ["Detail Numb...", "1"],
  ["Rotation on ...", "None"],
  ["Visibility/Gra...", "Edit...", "button"],
  ["Graphic Disp...", "Edit...", "button"],
  ["Orientation", "Project North"],
  ["Wall Join Dis...", "Clean all wall j..."],
  ["Discipline", "Architectural"],
];

function Properties() {
  return (
    <aside className="flex w-[224px] shrink-0 flex-col border-l-2 border-[#c8c8c9] bg-[#eeeeef] pl-px text-[12px]">
      <div className="flex h-[22px] shrink-0 items-center justify-between pt-0.5 pr-1 pl-0.5 text-[#555]">
        <h2>Properties</h2>
        <button aria-label="Close properties"><CloseX /></button>
      </div>
      <button className="ml-[3px] flex h-[72px] shrink-0 items-center pt-0.5 pr-1 text-left text-[#555]">
        <span className="flex h-[66px] w-[67px] items-center justify-center border border-[#d8d8da]">
          <Ic s="size-8" vb="0 0 32 32"><path d="M1 1h19v29H1z" fill="#d3dbe8" strokeWidth="1.500" /><path d="M20 3h9v9H20z" fill="#eef1f6" /><path d="M12 12h19v19H12z" fill="#f6f8fb" strokeWidth="1.500" /><path d="M12 31V12h8V2" strokeDasharray="2 1.500" strokeWidth="1.500" /></Ic>
        </span>
        <span className="ml-1 flex-1">Floor Plan</span>
        <Caret s="h-1 w-[7px]" />
      </button>
      <div className="flex h-6 shrink-0 items-center pt-px">
        <label className="relative flex items-center">
          <select aria-label="View" className="h-6 w-[139px] appearance-none border border-[#cfcfcf] bg-[#dfdfe0] pl-0.5 text-[13px]"><option>Floor Plan: Basemer</option></select>
          <span className="pointer-events-none absolute right-1"><Chevron s="size-2" w={1.500} color="#666" /></span>
        </label>
        <button className="ml-1 flex items-center gap-0.5 text-[13px] whitespace-nowrap">
          <Ic s="size-3.5"><path d="M1 2h6v5H1zM9 2h6v5H9zM1 9h6v5H1zM9 9h6v5H9z" fill="#eef" /><path d="M8 0v16" /></Ic>Edit Type
        </button>
      </div>
      <div className="flex min-h-0 flex-1">
        <div className="min-w-0 flex-1 overflow-hidden bg-white">
          <table className="w-full table-fixed border-collapse">
            <colgroup><col className="w-[94px]" /><col /><col className="w-3" /></colgroup>
            <thead>
              <tr className="h-[23px] bg-[#d9d9da]"><th colSpan={2} className="pt-0.5 pl-px text-left text-[13px] leading-5 font-normal">Graphics</th><th className="align-top"><svg className="mx-auto mt-0.5 h-2 w-1.5" viewBox="0 0 6 8" fill="none" stroke="#222" aria-hidden="true"><path d="M1 4l2-2.500L5 4M1 7.500L3 5l2 2.500" /></svg></th></tr>
            </thead>
            <tbody>
              {props.map(([name, value, kind]) => (
                <tr key={name} className={`h-[23px] border-b border-[#d0d0d1] ${kind === "muted" ? "text-[#888]" : "text-[#2e2e30]"}`}>
                  <th className="overflow-hidden p-0 pl-2 text-left font-normal whitespace-pre">{name}</th>
                  <td className="overflow-hidden border-x border-[#d0d0d1] p-0 whitespace-nowrap">
                    {kind === "input" && <input aria-label={name} defaultValue={value} className="block h-[22px] w-full border border-[#333] px-1" />}
                    {kind === "button" && <button aria-label={`${name} edit`} className="block h-[22px] w-full border-r-2 border-b-2 border-[#b5b5b6] bg-[#dededf] pt-0.5">{value}</button>}
                    {(!kind || kind === "muted") && <span className="pl-0.5">{value}</span>}
                  </td>
                  <td />
                </tr>
              ))}
            </tbody>
          </table>
        </div>
        <div className="flex w-5 shrink-0 flex-col items-center py-1">
          <Chevron dir="up" />
          <span className="mt-1 h-[70px] w-4 bg-[#c8c7c9]" />
          <span className="mt-auto flex"><Chevron /></span>
        </div>
      </div>
      <div className="flex h-[26px] shrink-0 items-start justify-between pr-1 pl-px">
        <a href="#help" className="text-[13px] leading-6 text-[#2f7ac6] underline">Properties help</a>
        <button className="mt-px h-[21px] w-[75px] bg-[#c9c9ca] pt-0.5 text-[13px] leading-none text-[#999]">Apply</button>
      </div>
    </aside>
  );
}

/* ---------- status bar ---------- */

const selTools = [
  ["Select links", <Ic key="i"><rect x=".5" y="2" width="7" height="5" rx="2.500" fill="#f5c23e" stroke="#b98a20" /><rect x="7" y="2" width="7" height="5" rx="2.500" fill="#f5c23e" stroke="#b98a20" /><Arrow x={7} y={5} /></Ic>],
  ["Select underlay", <Ic key="i"><path d="M1 8l5-5h8M1 12h8M1 8h8" stroke="#3a7fc8" strokeWidth="1.600" /><RedX x={9.500} y={0.500} /><Arrow x={8} y={6} /></Ic>],
  ["Select pinned", <Ic key="i"><path d="M1 1h10v3L9 5v3h3v2H0V8h3V5L1 4zM5 10h1v5H5z" fill="#f28c3a" stroke="#a55318" strokeWidth=".9" /><Arrow x={8} y={5} /></Ic>],
  ["Select by face", <Ic key="i"><path d="M1 3l4-2h5v12l-4 2H1z" fill="#cfe6fa" stroke="#3a7fc8" strokeWidth="1.400" /><RedX x={9.500} y={0.500} /><Arrow x={8} y={6} /></Ic>],
  ["Drag elements", <Ic key="i"><path d="M5 0v9M.5 4.500h9" stroke="#222" strokeWidth="1.500" /><path d="M3 2l2-2 2 2zM3 7.500l2 2 2-2zM2 2.500v4l-2-2zM8 2.500v4l2-2z" fill="#222" stroke="none" /><Arrow x={8.500} y={5.500} /></Ic>],
  ["Background processes", <Ic key="i"><circle cx="8" cy="8" r="5.500" stroke="#a6a6a8" strokeWidth="2.500" strokeDasharray="3 1.400" /></Ic>],
];

function Combo({ label, value }) {
  return (
    <label className="relative flex items-center">
      <select aria-label={label} className="h-[21px] w-[208px] appearance-none bg-[#f6f6f7] pl-0.5 text-[13px] text-[#999]"><option>{value}</option></select>
      <span className="pointer-events-none absolute right-1"><Chevron s="size-2" w={1.200} color="#999" /></span>
    </label>
  );
}

function StatusBar() {
  return (
    <footer className="flex h-[27px] shrink-0 items-center overflow-hidden bg-[#c8c8c9] pb-0.5 text-[12px]">
      <span className="w-[330px] shrink-0 whitespace-nowrap">Click to select, TAB for alternates, CTRL adds, SHIFT unsele</span>
      <BarButton w="w-[25px]" label="Worksets"><Ic><path d="M1 5h4v9H1zM6 2h4v4H6zM7 7v8M11 5h4M12 5v9" stroke="#999" fill="#bbb" strokeWidth="1.500" /></Ic></BarButton>
      <Combo label="Active workset" value="" />
      <BarButton w="w-6" label="Editable only"><Ic><path d="M3 12l3-4M6 2h9l-2 5H7zM1 14h6" stroke="#999" fill="#aaa" strokeWidth="1.500" /></Ic></BarButton>
      <span className="w-[23px] text-center text-[13px]">:0</span>
      <BarButton w="w-6" label="Design options"><Ic><path d="M1 1.500h14v13H1z" fill="#f2f3f8" stroke="#444b66" strokeWidth="1.400" /><path d="M1 3h14" stroke="#444b66" strokeWidth="2" /><path d="M3 7h3M3 11h3M8 7h5M8 9.500h5M8 12h5" stroke="#444b66" strokeWidth="1.500" /></Ic></BarButton>
      <BarButton w="w-[26px]" label="Pick to edit"><Ic><path d="M2 2h8v12H2z" fill="#b0b0b0" stroke="#999" /><path d="M6 6l7 6M13 7v6H7" stroke="#888" strokeWidth="1.500" /></Ic></BarButton>
      <Combo label="Design option" value="Main Model" />
      <div className="ml-auto flex shrink-0 items-center gap-2">
        {selTools.map(([label, icon]) => <button key={label} aria-label={label}>{icon}</button>)}
        <button aria-label="Filter" className="-ml-0.5 flex items-center"><Ic s="size-[18px]"><path d="M1 1.500h14l-5.500 6V15l-3-2V7.500z" fill="#b8c4da" strokeWidth="1.300" /></Ic>:0</button>
      </div>
      <span className="w-2 shrink-0" />
    </footer>
  );
}

export default function App() {
  return (
    <div className="flex h-screen flex-col bg-black py-9 font-['Open_Sans','Noto_Sans',sans-serif] text-[#3b3b3d]">
      <TitleBar />
      <Tabs />
      <Ribbon />
      <div className="h-7 shrink-0 border-b border-[#c8c8c9] bg-[#ebebec]" />
      <div className="flex min-h-0 flex-1">
        <Browser />
        <Workspace />
        <Properties />
      </div>
      <StatusBar />
    </div>
  );
}
